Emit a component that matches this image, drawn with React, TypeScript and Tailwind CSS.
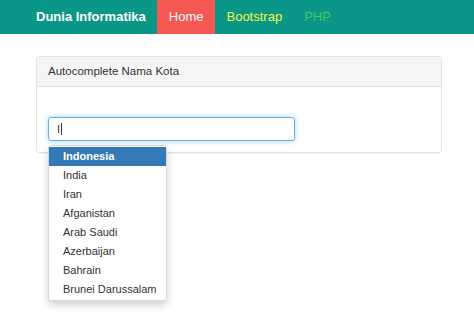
const countries = [
  "Indonesia",
  "India",
  "Iran",
  "Afganistan",
  "Arab Saudi",
  "Azerbaijan",
  "Bahrain",
  "Brunei Darussalam",
];

export default function App() {
  return (
    <div className="min-h-[326px] w-[474px] bg-white font-['Liberation_Sans',Arial,sans-serif] text-[#333]">
      {/* Navbar */}
      <nav className="flex h-[34px] items-stretch bg-[#0a9787] pl-[36px] text-[13px]">
        <a className="flex items-center pr-[11px] font-bold text-white">Dunia Informatika</a>
        <a className="flex items-center bg-[#f55753] px-[12px] text-white">Home</a>
        <a className="flex items-center px-[11px] text-[#f4f542]">Bootstrap</a>
        <a className="flex items-center px-[11px] text-[#49c46a]">PHP</a>
      </nav>

      {/* Panel */}
      <div className="relative mx-[36px] mt-[22px] w-[406px]">
        <div className="rounded-[3px] border border-[#e4e4e4] shadow-[0_1px_1px_rgba(0,0,0,0.04)]">
          <div className="flex h-[30px] items-center border-b border-[#e4e4e4] bg-[#f5f5f5] px-[11px] text-[11.5px] text-[#333]">
            Autocomplete Nama Kota
          </div>
          <div className="px-[11px] pb-[11px] pt-[30px]">
            <div className="flex h-[24px] w-[247px] items-center rounded-[3px] border border-[#66afe9] px-[8px] text-[11px] shadow-[0_0_5px_rgba(102,175,233,0.6)]">
              <span>I</span>
              <span className="ml-[1px] h-[12px] w-px bg-[#333]" />
            </div>
          </div>
        </div>

        {/* Autocomplete menu */}
        <ul className="absolute left-[12px] top-[89px] w-[119px] rounded-[3px] border border-[#d8d8d8] bg-white py-[1px] text-[11px] shadow-[0_4px_8px_rgba(0,0,0,0.18)]">
          {countries.map((c, i) => (
            <li
              key={c}
              className={
                i === 0
                  ? "flex h-[19px] items-center whitespace-nowrap bg-[#337ab7] px-[14px] font-bold text-white"
                  : "flex h-[19px] items-center whitespace-nowrap px-[14px] text-[#333]"
              }
            >
              {c}
            </li>
          ))}
        </ul>
      </div>
    </div>
  );
}
